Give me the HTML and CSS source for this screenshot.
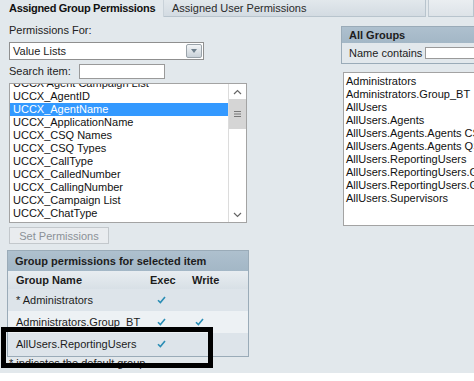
FILE: index.html
```html
<!DOCTYPE html>
<html lang="en">
<head>
  <meta charset="UTF-8">
  <title>Assigned Group Permissions</title>
  <link rel="stylesheet" href="styles.css">
</head>
<body>
  <div class="tabs">
    <div class="tab active">Assigned Group Permissions</div>
    <div class="tab">Assigned User Permissions</div>
    <div class="tab spare"></div>
  </div>

  <div class="content">
    <div class="left-col">
      <div class="field-label">Permissions For:</div>
      <div class="select">
        <span>Value Lists</span>
        <span class="select-btn"><span class="tri"></span></span>
      </div>
      <div class="search-row">
        <span>Search item:</span>
        <span class="text-input search-input"></span>
      </div>

      <div class="listbox">
        <ul class="items">
          <li>UCCX Agent Campaign List</li>
          <li>UCCX_AgentID</li>
          <li class="selected">UCCX_AgentName</li>
          <li>UCCX_ApplicationName</li>
          <li>UCCX_CSQ Names</li>
          <li>UCCX_CSQ Types</li>
          <li>UCCX_CallType</li>
          <li>UCCX_CalledNumber</li>
          <li>UCCX_CallingNumber</li>
          <li>UCCX_Campaign List</li>
          <li>UCCX_ChatType</li>
        </ul>
        <div class="scrollbar">
          <div class="sb-arrow">
            <svg width="9" height="6" viewBox="0 0 9 6"><path d="M1 5 L4.5 1.5 L8 5" fill="none" stroke="#666" stroke-width="1.2"/></svg>
          </div>
          <div class="sb-thumb">
            <svg width="7" height="6" viewBox="0 0 7 6"><path d="M0 0.5 H7 M0 3 H7 M0 5.5 H7" stroke="#777" stroke-width="1"/></svg>
          </div>
          <div class="sb-track"></div>
          <div class="sb-arrow">
            <svg width="9" height="6" viewBox="0 0 9 6"><path d="M1 1 L4.5 4.5 L8 1" fill="none" stroke="#666" stroke-width="1.2"/></svg>
          </div>
        </div>
      </div>

      <button class="set-btn" disabled>Set Permissions</button>

      <div class="perm-panel">
        <div class="panel-head">Group permissions for selected item</div>
        <div class="perm-row col-head">
          <span class="c-name">Group Name</span>
          <span class="c-exec">Exec</span>
          <span class="c-write">Write</span>
        </div>
        <div class="perm-row">
          <span class="c-name">* Administrators</span>
          <span class="c-exec check"><svg width="9" height="8" viewBox="0 0 9 8"><path d="M1 4.2 L3.4 6.6 L8 1" fill="none" stroke="#2a8db5" stroke-width="1.6"/></svg></span>
          <span class="c-write"></span>
        </div>
        <div class="perm-row alt">
          <span class="c-name">Administrators.Group_BT</span>
          <span class="c-exec check"><svg width="9" height="8" viewBox="0 0 9 8"><path d="M1 4.2 L3.4 6.6 L8 1" fill="none" stroke="#2a8db5" stroke-width="1.6"/></svg></span>
          <span class="c-write check"><svg width="9" height="8" viewBox="0 0 9 8"><path d="M1 4.2 L3.4 6.6 L8 1" fill="none" stroke="#2a8db5" stroke-width="1.6"/></svg></span>
        </div>
        <div class="perm-row">
          <span class="c-name">AllUsers.ReportingUsers</span>
          <span class="c-exec check"><svg width="9" height="8" viewBox="0 0 9 8"><path d="M1 4.2 L3.4 6.6 L8 1" fill="none" stroke="#2a8db5" stroke-width="1.6"/></svg></span>
          <span class="c-write"></span>
        </div>
      </div>
      <div class="note">* indicates the default group.</div>

      <div class="highlight"></div>
    </div>

    <div class="right-col">
      <div class="groups-panel">
        <div class="panel-head">All Groups</div>
        <div class="filter-row">
          <span class="filter-label">Name contains</span>
          <span class="text-input filter-input"></span>
        </div>
      </div>
      <ul class="group-list">
        <li>Administrators</li>
        <li>Administrators.Group_BT</li>
        <li>AllUsers</li>
        <li>AllUsers.Agents</li>
        <li>AllUsers.Agents.Agents CSQ</li>
        <li>AllUsers.Agents.Agents QSQ</li>
        <li>AllUsers.ReportingUsers</li>
        <li>AllUsers.ReportingUsers.Group1</li>
        <li>AllUsers.ReportingUsers.Group2</li>
        <li>AllUsers.Supervisors</li>
      </ul>
    </div>
  </div>
</body>
</html>
```

FILE: styles.css
```css
:root {
  --page-bg: #e2e8ec;
  --panel-head: #a9bccb;
  --panel-border: #9aabb8;
  --list-border: #a3a3a3;
  --row-a: #dde4ea;
  --row-b: #edf1f4;
  --selected: #3399ff;
  --text: #1c1c1c;
}
html, body {
  margin: 0;
  padding: 0;
  overflow: hidden;
}
body {
  font-family: 'Liberation Sans', Arial, sans-serif;
  font-size: 11px;
  color: var(--text);
  background-color: #ffffff;
  width: 474px;
  height: 381px;
}
.tabs {
  display: flex;
  height: 17px;
  background-color: var(--page-bg);
}
.tab {
  box-sizing: border-box;
  height: 17px;
  line-height: 16px;
  padding: 0 8px;
  white-space: nowrap;
  color: #2a2a2a;
  background: linear-gradient(#e2e8ec, #d3dbe2);
  border-right: 1px solid #b8c4cd;
  border-bottom: 1px solid #b8c4cd;
  width: 262px;
}
.tab.active {
  width: 164px;
  padding: 0 9px;
  font-weight: bold;
  letter-spacing: -0.3px;
  color: #111;
  background: var(--page-bg);
  border-bottom: none;
  border-right: 1px solid #c9d2d9;
}
.tab.spare {
  flex: 1;
  margin-left: 2px;
  border-left: 1px solid #c0cad2;
  background: linear-gradient(#eaeef1, #dde3e8);
}
.content {
  display: flex;
  background-color: var(--page-bg);
  height: 356px;
}
.left-col {
  position: relative;
  flex-shrink: 0;
  width: 239px;
  padding: 6px 0 0 9px;
}
.field-label {
  height: 14px;
  line-height: 14px;
  color: #222;
}
.select {
  box-sizing: border-box;
  display: flex;
  align-items: center;
  justify-content: space-between;
  margin-top: 5px;
  width: 195px;
  height: 18px;
  padding: 0 1px 0 3px;
  background: #fff;
  border: 1px solid #8f8f8f;
}
.select-btn {
  box-sizing: border-box;
  display: flex;
  align-items: center;
  justify-content: center;
  width: 16px;
  height: 14px;
  border: 1px solid #9aa3aa;
  border-radius: 2px;
  background: linear-gradient(#f3f5f7, #c9d1d8);
}
.tri {
  width: 0;
  height: 0;
  border-left: 3px solid transparent;
  border-right: 3px solid transparent;
  border-top: 4px solid #6e7f8c;
}
.search-row {
  display: flex;
  align-items: center;
  gap: 8px;
  margin-top: 3px;
  height: 16px;
}
.text-input {
  box-sizing: border-box;
  display: block;
  flex-shrink: 0;
  background: #fff;
  border: 1px solid #9a9a9a;
}
.search-input {
  width: 86px;
  height: 15px;
}
.listbox {
  box-sizing: border-box;
  display: flex;
  margin-top: 4px;
  width: 238px;
  height: 140px;
  background: #fff;
  border: 1px solid var(--list-border);
  overflow: hidden;
}
.items {
  list-style: none;
  margin: -7px 0 0 0;
  padding: 0;
  flex: 1;
}
.items li, .group-list li {
  height: 13px;
  line-height: 13px;
  padding-left: 3px;
  white-space: nowrap;
  color: #111;
}
.items li.selected {
  background-color: var(--selected);
  color: #fff;
}
.scrollbar {
  display: flex;
  flex-direction: column;
  width: 17px;
  border-left: 1px solid #dcdcdc;
  background: #fff;
}
.sb-arrow {
  display: flex;
  align-items: center;
  justify-content: center;
  height: 15px;
}
.sb-thumb {
  display: flex;
  align-items: center;
  justify-content: center;
  height: 30px;
  background: #d5d5d5;
}
.sb-track {
  flex: 1;
}
.set-btn {
  display: block;
  margin-top: 4px;
  width: 100px;
  height: 17px;
  padding: 0;
  font-family: inherit;
  font-size: 11px;
  color: #8b9197;
  background: #e9ecef;
  border: 1px solid #c3c8cc;
}
.perm-panel {
  box-sizing: border-box;
  margin: 6px 0 0 -2px;
  width: 242px;
  height: 107px;
  border: 1px solid var(--panel-border);
  background: var(--row-a);
}
.panel-head {
  height: 20px;
  line-height: 20px;
  padding-left: 7px;
  font-weight: bold;
  white-space: nowrap;
  color: #1d1d1d;
  background: linear-gradient(#aec0ce, #a3b7c6);
}
.perm-row {
  display: flex;
  align-items: center;
  height: 22px;
  white-space: nowrap;
  background: var(--row-a);
}
.perm-row.alt {
  background: var(--row-b);
}
.perm-row.col-head {
  height: 18px;
  font-weight: bold;
  background: linear-gradient(#e8edf1, #d8e0e6);
}
.c-name {
  width: 134px;
  padding-left: 8px;
}
.c-exec {
  width: 42px;
}
.c-write {
  width: 40px;
}
.check {
  display: flex;
  align-items: center;
  padding-left: 7px;
  box-sizing: border-box;
}
.c-write.check {
  padding-left: 3px;
}
.note {
  margin-top: 0;
  height: 13px;
  line-height: 13px;
  color: #222;
}
.highlight {
  position: absolute;
  left: 1px;
  top: 310px;
  width: 202px;
  height: 31px;
  border: 5px solid #000;
}
.right-col {
  margin-left: 93px;
  padding-top: 9px;
  flex: 1;
  min-width: 0;
}
.groups-panel {
  box-sizing: border-box;
  border: 1px solid var(--panel-border);
  border-right: none;
  width: 140px;
  background: var(--page-bg);
}
.groups-panel .panel-head {
  height: 16px;
  line-height: 16px;
}
.filter-row {
  display: flex;
  align-items: center;
  gap: 3px;
  height: 20px;
  padding-left: 7px;
  white-space: nowrap;
}
.filter-label {
  flex-shrink: 0;
}
.filter-input {
  width: 60px;
  height: 12px;
}
.group-list {
  box-sizing: border-box;
  list-style: none;
  margin: 8px 0 0 2px;
  padding: 2px 0 0 0;
  width: 140px;
  height: 154px;
  background: #fff;
  border: 1px solid var(--list-border);
  border-right: none;
  overflow: hidden;
}
.group-list li {
  padding-left: 2px;
}
```
